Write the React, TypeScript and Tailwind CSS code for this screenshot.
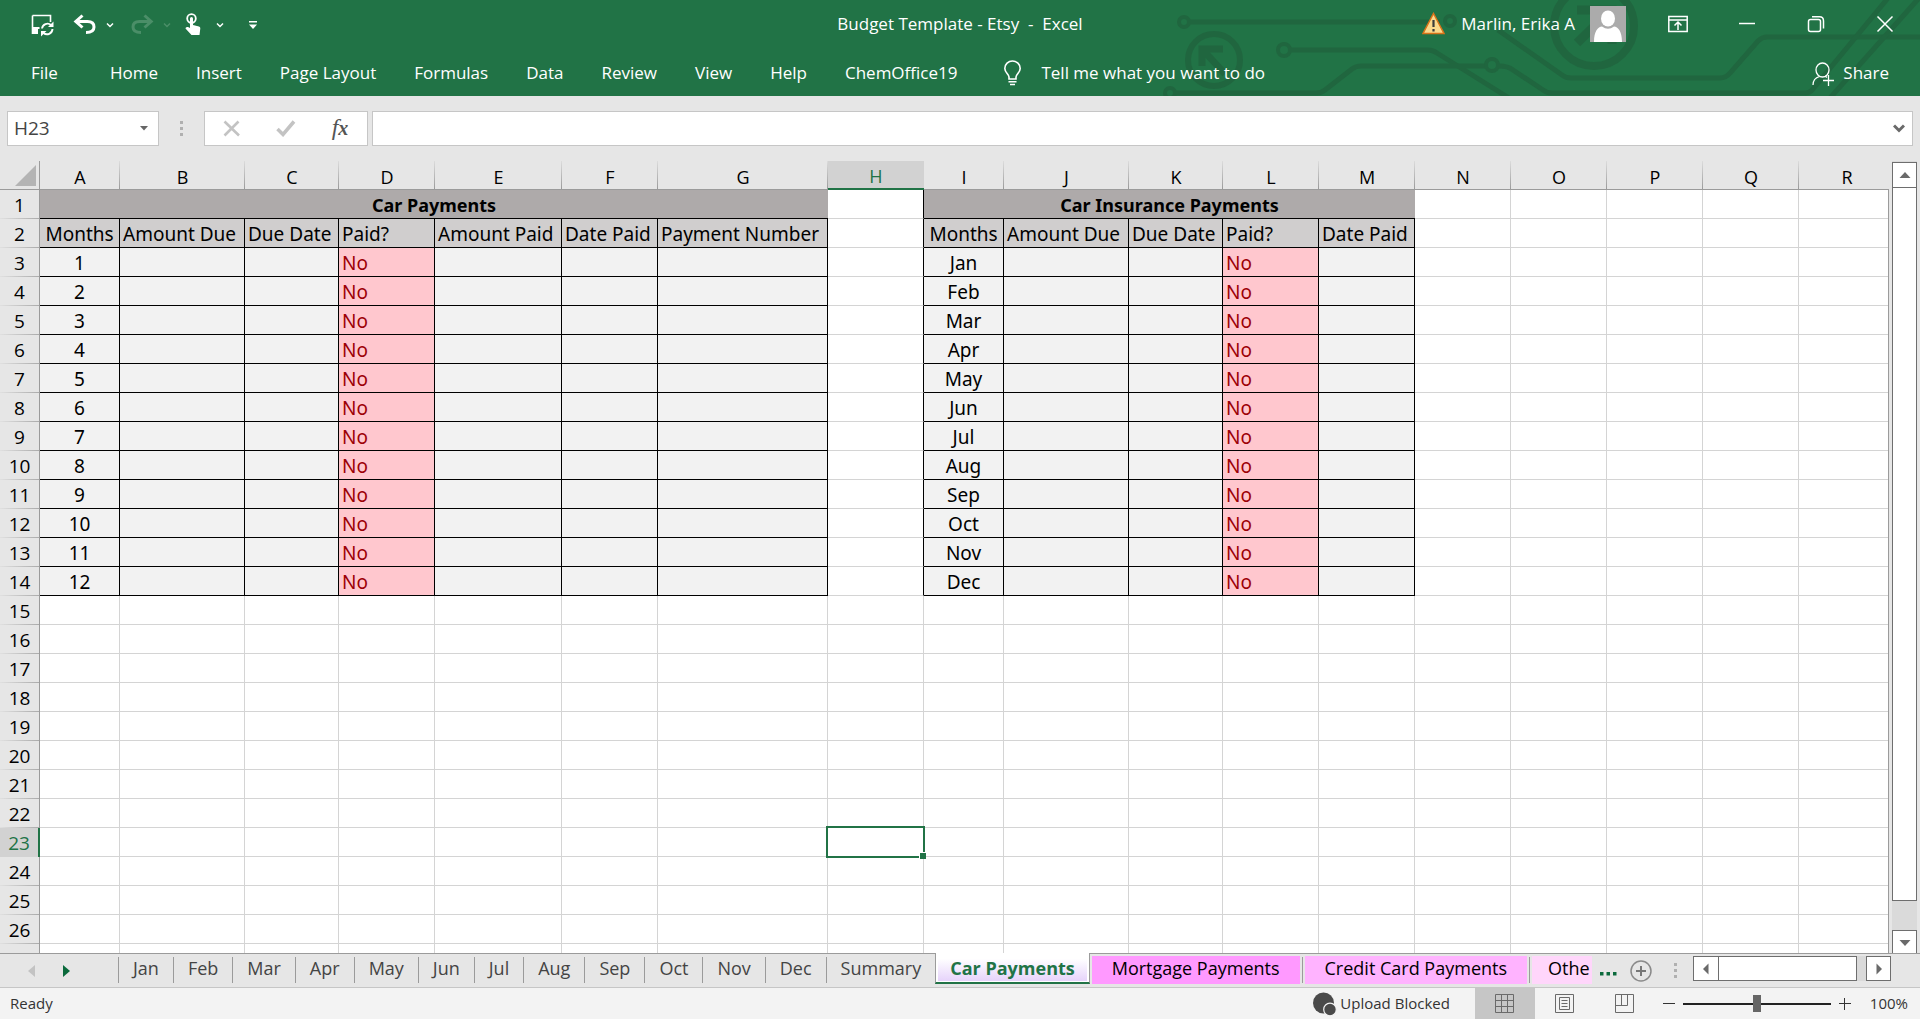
import type { ReactNode } from "react";

const COLUMNS: [string, string][] = [
  ["A", "w-[80px]"],
  ["B", "w-[125px]"],
  ["C", "w-[94px]"],
  ["D", "w-[96px]"],
  ["E", "w-[127px]"],
  ["F", "w-[96px]"],
  ["G", "w-[170px]"],
  ["H", "w-[96px]"],
  ["I", "w-[80px]"],
  ["J", "w-[125px]"],
  ["K", "w-[94px]"],
  ["L", "w-[96px]"],
  ["M", "w-[96px]"],
  ["N", "w-[96px]"],
  ["O", "w-[96px]"],
  ["P", "w-[96px]"],
  ["Q", "w-[96px]"],
  ["R", "w-[96px]"],
];

const HEADINGS: Record<string, string> = {
  A: "Months",
  B: "Amount Due",
  C: "Due Date",
  D: "Paid?",
  E: "Amount Paid",
  F: "Date Paid",
  G: "Payment Number",
  I: "Months",
  J: "Amount Due",
  K: "Due Date",
  L: "Paid?",
  M: "Date Paid",
};

const MONTHS = ["Jan", "Feb", "Mar", "Apr", "May", "Jun", "Jul", "Aug", "Sep", "Oct", "Nov", "Dec"];
const RIBBON = ["Home", "Insert", "Page Layout", "Formulas", "Data", "Review", "View", "Help", "ChemOffice19"];

/* ---------- title bar and ribbon ---------- */

function CircuitArt() {
  return (
    <svg className="pointer-events-none absolute right-0 top-0" width="760" height="96" viewBox="1160 0 760 96" fill="none" stroke="#20663f" strokeWidth="5" aria-hidden="true">
      <circle cx="1184" cy="22" r="5" strokeWidth="4" />
      <path d="M1190 22H1440" />
      <circle cx="1450" cy="21" r="5" strokeWidth="4" />
      <path d="M1498 30L1562 75Q1566 78 1571 78H1720Q1726 78 1730 73L1758 41Q1762 37 1767 37H1920" />
      <circle cx="1284" cy="50" r="6" strokeWidth="4" />
      <path d="M1291 50H1428Q1433 50 1437 53L1509 98" />
      <circle cx="1170" cy="93" r="5" strokeWidth="4" />
      <path d="M1176 93H1316Q1321 93 1325 90L1352 69Q1356 66 1361 66H1485" />
      <circle cx="1492" cy="65" r="6" strokeWidth="4" />
      <path d="M1499 66Q1508 66 1513 70L1543 90Q1547 93 1552 93H1805Q1810 93 1813 89L1888 -2M1830 98L1919 -2" />
      <circle cx="1214" cy="60" r="26" strokeWidth="6" />
      <path d="M1202 66V49H1223M1203 50L1225 74" strokeWidth="7" />
      <circle cx="1594" cy="26" r="40" strokeWidth="8" />
      <path d="M1577 10H1612V44M1611 10L1577 43" strokeWidth="9" />
    </svg>
  );
}

function Chevron({ className }: { className: string }) {
  return (
    <svg className={className} width="8" height="6" viewBox="0 0 8 6" fill="none" stroke="currentColor" strokeWidth="1.5">
      <path d="M1 1.5L4 4.5L7 1.5" />
    </svg>
  );
}

function UndoIcon({ className }: { className: string }) {
  return (
    <svg className={className} width="24" height="24" viewBox="0 0 24 24" fill="none" stroke="currentColor" strokeWidth="3">
      <path d="M9.5 2.5L2.8 8.5L9.5 14.5M3 8.5H14.5C19 8.5 21 11 21 14C21 17.500 18.500 19.500 13 19.500" />
    </svg>
  );
}

function QuickAccess() {
  return (
    <div className="flex items-center pt-0.5 pl-[30px] text-white">
      <button aria-label="Save" className="mr-[18px]">
        <svg width="25" height="24" viewBox="0 0 25 24" fill="none">
          <path d="M2.500 2.500H20.500V9M2.500 2.500V21" stroke="#fff" strokeWidth="1.600" />
          <path d="M2 14H9.500V16H8V21H2Z" fill="#fff" />
          <path d="M12 15.500A5.500 5.500 0 0 1 21 12M22.500 16A5.500 5.500 0 0 1 13.500 20" stroke="#fff" strokeWidth="1.900" />
          <path d="M23.500 8.500V14H18Z" fill="#fff" />
          <path d="M11 23.500V18H16.500Z" fill="#fff" />
        </svg>
      </button>
      <button aria-label="Undo" className="flex items-center">
        <UndoIcon className="" />
        <Chevron className="ml-[9px]" />
      </button>
      <button aria-label="Redo" disabled className="ml-[16px] flex items-center text-[#4b8e68]">
        <UndoIcon className="-scale-x-100" />
        <Chevron className="ml-[9px]" />
      </button>
      <button aria-label="Touch mode" className="ml-[13px] flex items-center">
        <svg width="18" height="24" viewBox="0 0 18 24" fill="#fff">
          <circle cx="7.500" cy="5.500" r="4.300" fill="none" stroke="#fff" strokeWidth="1.800" />
          <path d="M6 5.500a1.500 1.500 0 0 1 3 0V12l6 1.500q1.500 .5 1.300 2L15.500 22H7.500L1.500 15.500Q1.500 13.500 4 14L6 15Z" />
        </svg>
        <Chevron className="ml-[14px]" />
      </button>
      <button aria-label="Customize Quick Access Toolbar" className="ml-[25px]">
        <svg width="8" height="8" viewBox="0 0 8 8">
          <path d="M0 0H8V1.500H0ZM0 3.500H8L4 8Z" fill="#fff" />
        </svg>
      </button>
    </div>
  );
}

function WindowButton({ label, children }: { label: string; children: ReactNode }) {
  return (
    <button aria-label={label} className="flex h-full w-[69px] items-center justify-center">
      <svg width="20" height="18" viewBox="0 0 20 18" fill="none" stroke="#fff" strokeWidth="1.500">
        {children}
      </svg>
    </button>
  );
}

function TitleBar() {
  return (
    <div className="relative grid h-[47px] grid-cols-[1fr_auto_1fr] items-center text-[17px] text-white">
      <QuickAccess />
      <h1 className="whitespace-pre">{"Budget Template - Etsy  -  Excel"}</h1>
      <div className="flex h-full items-center justify-end pr-px">
        <svg width="23" height="23" viewBox="0 0 23 23" aria-label="Account problem">
          <path d="M11.500 1.500L22 21.500H1Z" fill="#fbd98c" stroke="#d9731a" strokeWidth="1.500" />
          <path d="M11.500 8V15M11.500 17V19.500" stroke="#3b3b3b" strokeWidth="2.200" />
        </svg>
        <button className="ml-4 flex h-full items-center gap-[15px]">
          Marlin, Erika A
          <svg width="36" height="36" viewBox="0 0 36 36">
            <path d="M0 0H36V36H0Z" fill="#ababab" />
            <ellipse cx="18" cy="12.500" rx="7" ry="8" fill="#fff" />
            <path d="M4 36C4 25 8 21 12 20.500Q18 25 24 20.500C28 21 32 25 32 36Z" fill="#fff" />
          </svg>
        </button>
        <div className="ml-[17px] flex h-full">
          <WindowButton label="Ribbon display options">
            <path d="M0.800 1.500H19.200V16.500H0.800ZM1 5H19M10 15V7M6.500 10.500L10 7L13.500 10.500" />
          </WindowButton>
          <WindowButton label="Minimize">
            <path d="M2 8.500H18" />
          </WindowButton>
          <WindowButton label="Restore">
            <rect x="2.500" y="4.500" width="12" height="12" rx="2" />
            <path d="M6 1.800H13.500Q17.500 1.800 17.500 6V13.500" />
          </WindowButton>
          <WindowButton label="Close">
            <path d="M2.500 1.500L17.500 16.500M17.500 1.500L2.500 16.500" />
          </WindowButton>
        </div>
      </div>
    </div>
  );
}

function RibbonTabs() {
  return (
    <nav className="relative flex h-[49px] items-center pt-0.5 text-[17px] text-white">
      <button className="pr-[52px] pl-[31px]">File</button>
      <div className="flex gap-[38px]">
        {RIBBON.map((name) => (
          <button key={name} className="whitespace-nowrap">
            {name}
          </button>
        ))}
      </div>
      <label className="ml-[46px] flex items-center gap-[19px]">
        <svg width="19" height="26" viewBox="0 0 19 26" fill="none" stroke="#fff" strokeWidth="1.600">
          <path d="M6 19V17C6 14 1.800 12.500 1.800 8.500A7.700 7.500 0 0 1 17.200 8.500C17.200 12.500 13 14 13 17V19ZM5.500 21.800H13.500M7 24.500H12" />
        </svg>
        <input aria-label="Tell me what you want to do" placeholder="Tell me what you want to do" className="w-[240px] bg-transparent outline-none placeholder:text-white placeholder:opacity-100" />
      </label>
      <button className="ml-auto flex items-center gap-2 pr-[31px]">
        <svg width="23" height="25" viewBox="0 0 23 25" fill="none" stroke="#fff" strokeWidth="1.300" className="mt-1">
          <ellipse cx="10.500" cy="8" rx="6.500" ry="7" />
          <path d="M1 23C1 18 4 15.500 7.500 14.500M13 14L15 15.500M16.500 13V24M11 18.500H22" />
        </svg>
        Share
      </button>
    </nav>
  );
}

/* ---------- formula bar ---------- */

function Dots() {
  return (
    <svg width="4" height="16" viewBox="0 0 4 16" fill="#b0b0b0" aria-hidden="true">
      <path d="M0 0H3V3H0ZM0 6H3V9H0ZM0 12H3V15H0Z" />
    </svg>
  );
}

function FormulaBar() {
  return (
    <div className="flex items-center bg-[#e6e6e6] px-[7px] py-[15px]">
      <div className="flex h-[35px] w-[152px] shrink-0 items-center border border-[#c6c6c6] bg-white">
        <input aria-label="Name box" defaultValue="H23" className="w-full min-w-0 bg-transparent pl-1.5 text-[19px] text-[#444] outline-none" />
        <button aria-label="Name box list" className="px-2.5">
          <svg width="8" height="5" viewBox="0 0 8 5">
            <path d="M0 0H8L4 4.500Z" fill="#666" />
          </svg>
        </button>
      </div>
      <div className="flex w-[45px] shrink-0 justify-center">
        <Dots />
      </div>
      <div className="flex h-[35px] w-[164px] shrink-0 items-center justify-around border border-[#c6c6c6] bg-white">
        <button aria-label="Cancel" className="flex w-[50px] justify-center">
          <svg width="18" height="17" viewBox="0 0 18 17" fill="none" stroke="#c3c3c3" strokeWidth="2.600">
            <path d="M1.500 1.500L16 15.500M15.500 1.500L1.500 15.500" />
          </svg>
        </button>
        <button aria-label="Enter" className="flex w-[50px] justify-center">
          <svg width="20" height="17" viewBox="0 0 20 17" fill="none" stroke="#c3c3c3" strokeWidth="3.500">
            <path d="M1.500 9L7 14.500L18 1.500" />
          </svg>
        </button>
        <button aria-label="Insert function" className="w-[50px] pb-1 font-['Liberation_Serif',serif] text-[24px] leading-none italic text-[#555]">
          f<span className="text-[20px] font-bold">x</span>
        </button>
      </div>
      <div className="ml-1 flex h-[35px] flex-1 items-center border border-[#c6c6c6] bg-white">
        <input aria-label="Formula bar" className="h-full flex-1 bg-transparent px-2 outline-none" />
        <button aria-label="Expand formula bar" className="px-[7px]">
          <svg width="12" height="9" viewBox="0 0 12 9" fill="none" stroke="#6a6a6a" strokeWidth="3">
            <path d="M1 1.500L6 6.500L11 1.500" />
          </svg>
        </button>
      </div>
    </div>
  );
}

/* ---------- grid ---------- */

function SheetCell({ col, row }: { col: string; row: number }) {
  const inTable = row <= 14 && col in HEADINGS;

  if (inTable && row === 2) {
    return (
      <td className={`border-r border-b border-black bg-[#d0cece] pt-[2px] whitespace-nowrap ${col === "A" || col === "I" ? "text-center" : "px-[3px]"}`}>
        {HEADINGS[col]}
      </td>
    );
  }
  if (inTable && (col === "D" || col === "L")) {
    return <td className="border-r border-b border-black bg-[#ffc7ce] px-[3px] pt-[2px] text-[#9c0006]">No</td>;
  }
  if (inTable) {
    const text = col === "A" ? row - 2 : col === "I" ? MONTHS[row - 3] : "";
    return <td className="border-r border-b border-black bg-[#f2f2f2] pt-[2px] text-center">{text}</td>;
  }
  if (col === "H" && row <= 14) {
    return <td className="border-r border-b border-r-black border-b-[#d4d4d4]" />;
  }
  if (col === "H" && row === 23) {
    return (
      <td className="relative border-r border-b border-[#d4d4d4]">
        <div className="absolute -inset-[2px] border-2 border-[#217346]">
          <div className="absolute -right-[3px] -bottom-[3px] size-[7px] border-t border-l border-white bg-[#217346]" />
        </div>
      </td>
    );
  }
  return <td className="border-r border-b border-[#d4d4d4]" />;
}

function RowHeader({ row }: { row: number }) {
  const selected = row === 23;
  return (
    <th
      scope="row"
      className={
        selected
          ? "border-r-2 border-r-[#217346] bg-[#d2d2d2] pt-px text-center font-['Open_Sans'] text-[19px] font-normal text-[#217346]"
          : "border-r border-r-[#9b9b9b] bg-[#e6e6e6] bg-[linear-gradient(to_right,#e0e0e0,#ababab)] bg-[length:100%_1px] bg-bottom bg-no-repeat pt-px text-center font-['Open_Sans'] text-[19px] font-normal"
      }
    >
      {row}
    </th>
  );
}

function SheetGrid() {
  const rows = Array.from({ length: 27 }, (_, i) => i + 1);
  return (
    <div className="min-w-0 flex-1 overflow-hidden bg-[linear-gradient(#e6e6e6_28px,#9b9b9b_28px)] pr-px">
      <div className="h-full overflow-hidden bg-white">
        <table className="w-[1895px] table-fixed border-separate border-spacing-0 font-['Noto_Sans',sans-serif] text-[19px] leading-none text-black">
          <colgroup>
            <col className="w-[40px]" />
            {COLUMNS.map(([name, width]) => (
              <col key={name} className={width} />
            ))}
          </colgroup>
          <thead>
            <tr className="h-[29px]">
              <th className="border-r border-b border-[#9b9b9b] bg-[#e6e6e6] p-0">
                <button aria-label="Select all" className="flex h-[28px] w-full items-end justify-end pr-[3px] pb-[3px]">
                  <svg width="21" height="21" viewBox="0 0 21 21">
                    <path d="M21 0V21H0Z" fill="#b4b4b4" />
                  </svg>
                </button>
              </th>
              {COLUMNS.map(([name]) => (
                <th
                  key={name}
                  scope="col"
                  className={
                    name === "H"
                      ? "border-b-2 border-[#217346] bg-[#d2d2d2] p-0 pt-[3px] font-['Open_Sans'] text-[18px] font-normal text-[#217346]"
                      : "border-b border-[#9b9b9b] bg-[#e6e6e6] bg-[linear-gradient(to_bottom,#dcdcdc,#9b9b9b)] bg-[length:1px_100%] bg-right bg-no-repeat p-0 pt-[3px] font-['Open_Sans'] text-[18px] font-normal"
                  }
                >
                  {name}
                </th>
              ))}
            </tr>
          </thead>
          <tbody>
            {rows.map((row) => (
              <tr key={row} className="h-[29px]">
                <RowHeader row={row} />
                {row === 1 ? (
                  <>
                    <td colSpan={7} className="border-b border-black bg-[#aeaaaa] pt-[2px] text-center text-[18px] font-bold">
                      Car Payments
                    </td>
                    <SheetCell col="H" row={1} />
                    <td colSpan={5} className="border-b border-black bg-[#aeaaaa] pt-[2px] text-center text-[18px] font-bold">
                      Car Insurance Payments
                    </td>
                    {["N", "O", "P", "Q", "R"].map((col) => (
                      <SheetCell key={col} col={col} row={1} />
                    ))}
                  </>
                ) : (
                  COLUMNS.map(([col]) => <SheetCell key={col} col={col} row={row} />)
                )}
              </tr>
            ))}
          </tbody>
        </table>
      </div>
    </div>
  );
}

function ScrollArrow({ label, d, className }: { label: string; d: string; className: string }) {
  return (
    <button aria-label={label} className={`flex shrink-0 items-center justify-center border border-[#6e6e6e] bg-white ${className}`}>
      <svg width="12" height="12" viewBox="0 0 12 12">
        <path d={d} fill="#6a6a6a" />
      </svg>
    </button>
  );
}

function VerticalScroll() {
  return (
    <div className="mx-[3px] -mb-[2px] flex w-[25px] flex-col bg-[#dadada] pt-px">
      <ScrollArrow label="Scroll up" d="M0.500 9L6 3L11.500 9Z" className="h-[26px]" />
      <div className="-mt-px flex-[715] border border-[#6e6e6e] bg-white" />
      <div className="flex-[29]" />
      <ScrollArrow label="Scroll down" d="M0.500 3L6 9L11.500 3Z" className="h-[25px]" />
    </div>
  );
}

/* ---------- sheet tabs and status bar ---------- */

function SheetTabs() {
  return (
    <div className="flex h-[35px] border-t border-b border-t-[#9b9b9b] border-b-[#c6c6c6] bg-[#e6e6e6]">
      <div className="flex w-[118px] shrink-0 items-center gap-[28px] pl-[28px]">
        <button aria-label="Previous sheets">
          <svg width="7" height="12" viewBox="0 0 7 12">
            <path d="M7 0V12L0 6Z" fill="#c3c3c3" />
          </svg>
        </button>
        <button aria-label="Next sheets">
          <svg width="7" height="12" viewBox="0 0 7 12">
            <path d="M0 0V12L7 6Z" fill="#0b6a3c" />
          </svg>
        </button>
      </div>
      <div className="-mt-px flex min-w-0 flex-1 overflow-hidden pt-px text-[18px] leading-none whitespace-nowrap text-[#444]">
        {[...MONTHS, "Summary"].map((name) => (
          <button key={name} className="mt-[3px] mb-[4px] shrink-0 border-l border-[#9b9b9b] px-[14px] pb-1">
            {name}
          </button>
        ))}
        <button className="-mt-px mb-[3px] shrink-0 border-x border-b-2 border-x-[#9b9b9b] border-b-[#217346] bg-white px-[2px] pb-px font-bold text-[#217346]">
          <span className="flex h-full items-center bg-[linear-gradient(#fff_20%,#e6d3fb)] px-[12px] pt-px">Car Payments</span>
        </button>
        <button className="mt-[2px] mb-[3px] ml-[2px] shrink-0 bg-[#ff99ff] px-[20px] pb-1 text-black">Mortgage Payments</button>
        <div className="mx-[2px] mt-[3px] mb-[4px] w-px shrink-0 bg-[#9b9b9b]" />
        <button className="mt-[2px] mb-[3px] shrink-0 bg-[#ffb3ff] px-[20px] pb-1 text-black">Credit Card Payments</button>
        <div className="mx-[2px] mt-[3px] mb-[4px] w-px shrink-0 bg-[#9b9b9b]" />
        <button className="mt-[2px] mb-[3px] min-w-0 flex-1 overflow-hidden bg-[#ffd6fb] pb-1 pl-[16px] text-left text-black">Othe</button>
      </div>
      <button aria-label="More sheets" className="ml-[8px] flex items-center pt-[6px]">
        <svg width="17" height="4" viewBox="0 0 17 4" fill="#0b6a3c">
          <path d="M0 0H3.500V3.500H0ZM6.500 0H10V3.500H6.500ZM13 0H16.500V3.500H13Z" />
        </svg>
      </button>
      <button aria-label="New sheet" className="ml-[13px]">
        <svg width="22" height="22" viewBox="0 0 22 22" fill="none" stroke="#8a8a8a">
          <circle cx="11" cy="11" r="10" strokeWidth="1.500" />
          <path d="M11 6V16M6 11H16" stroke="#777" strokeWidth="2" />
        </svg>
      </button>
      <div className="flex items-center pr-[15px] pl-[22px]">
        <Dots />
      </div>
      <div className="mr-[29px] flex items-center pb-1">
        <ScrollArrow label="Scroll left" d="M8.500 0.500L3 6L8.500 11.500Z" className="h-[25px] w-[26px]" />
        <div className="-ml-px h-[25px] w-[139px] border border-[#6e6e6e] bg-white" />
        <div className="h-[25px] w-[9px] bg-[#dadada]" />
        <ScrollArrow label="Scroll right" d="M3.500 0.500L9 6L3.500 11.500Z" className="h-[25px] w-[25px]" />
      </div>
    </div>
  );
}

function StatusBar() {
  return (
    <footer className="flex h-[31px] items-center bg-[#f3f3f3] text-[15px] text-[#333]">
      <span className="pl-[10px]">Ready</span>
      <div className="ml-auto flex items-center gap-[3px]">
        <svg width="24" height="24" viewBox="0 0 24 24" fill="#4a4a4a">
          <circle cx="10.500" cy="11" r="10.500" />
          <circle cx="17" cy="17.500" r="6.300" stroke="#f3f3f3" strokeWidth="1.200" />
        </svg>
        <span>Upload Blocked</span>
      </div>
      <div className="ml-[25px] flex h-full">
        <button aria-label="Normal view" className="flex w-[60px] items-center justify-center bg-[#c6c6c6]">
          <svg width="19" height="19" viewBox="0 0 19 19" fill="none" stroke="#6a6a6a">
            <path d="M.5 .5H18.500V18.500H.5ZM6.500 0V19M12.500 0V19M0 6.500H19M0 12.500H19" />
          </svg>
        </button>
        <button aria-label="Page layout view" className="flex w-[60px] items-center justify-center">
          <svg width="19" height="19" viewBox="0 0 19 19" fill="none" stroke="#6a6a6a">
            <path d="M.5 .5H18.500V18.500H.5ZM4.500 3.500H14.500V15.500H4.500ZM6.500 6.500H12.500M6.500 9.500H12.500M6.500 12.500H12.500" />
          </svg>
        </button>
        <button aria-label="Page break preview" className="flex w-[60px] items-center justify-center">
          <svg width="19" height="19" viewBox="0 0 19 19" fill="none" stroke="#6a6a6a">
            <path d="M.5 .5H18.500V18.500H.5ZM6.500 0V11M12.500 0V11.500M0 11.500H12.500" />
          </svg>
        </button>
      </div>
      <button aria-label="Zoom out" className="ml-[8px]">
        <svg width="12" height="12" viewBox="0 0 12 12" stroke="#333">
          <path d="M0 5.500H12" />
        </svg>
      </button>
      <input
        type="range"
        aria-label="Zoom"
        defaultValue={50}
        className="mx-[8px] h-[18px] w-[148px] appearance-none bg-[linear-gradient(#222,#222)] bg-[length:100%_2px] bg-center bg-no-repeat [&::-webkit-slider-thumb]:h-[17px] [&::-webkit-slider-thumb]:w-[8px] [&::-webkit-slider-thumb]:appearance-none [&::-webkit-slider-thumb]:rounded-none [&::-webkit-slider-thumb]:bg-[#666]"
      />
      <button aria-label="Zoom in">
        <svg width="12" height="12" viewBox="0 0 12 12" stroke="#333">
          <path d="M0 5.500H12M5.500 0V12" />
        </svg>
      </button>
      <button className="mr-[12px] ml-[19px]">100%</button>
    </footer>
  );
}

export default function App() {
  return (
    <div className="flex h-screen flex-col overflow-hidden bg-[#e6e6e6] font-['Open_Sans',sans-serif]">
      <header className="relative overflow-hidden bg-[#217346]">
        <CircuitArt />
        <TitleBar />
        <RibbonTabs />
      </header>
      <FormulaBar />
      <main className="flex min-h-0 flex-1">
        <SheetGrid />
        <VerticalScroll />
      </main>
      <SheetTabs />
      <StatusBar />
    </div>
  );
}
